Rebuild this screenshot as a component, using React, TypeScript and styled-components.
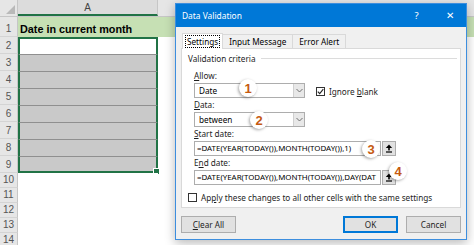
import React from 'react';
import styled, { createGlobalStyle } from 'styled-components';

const UI_FONT = `'Noto Sans', 'Open Sans', sans-serif`;
const SHEET_FONT = `'Liberation Sans', Arial, sans-serif`;
const GREEN = '#217346';

const GlobalStyle = createGlobalStyle`
  html, body {
    margin: 0;
    padding: 0;
    background: #fff;
    overflow: hidden;
  }
  #root {
    position: relative;
    width: 474px;
    height: 245px;
    overflow: hidden;
  }
`;

/* ---------- spreadsheet behind the dialog ---------- */

const Sheet = styled.div`
  display: flex;
  flex-direction: column;
  width: 474px;
  height: 245px;
  font-family: ${SHEET_FONT};
  background: #fff;
`;

const HeaderRow = styled.div`
  display: flex;
  flex: none;
  height: 17px;
  background: #e6e6e6;
  border-bottom: 1px solid #c6c6c6;
  box-sizing: border-box;
`;

const Corner = styled.div`
  position: relative;
  width: 18px;
  border-right: 1px solid #c6c6c6;
  box-sizing: border-box;

  &::after {
    content: '';
    position: absolute;
    right: 2px;
    bottom: 2px;
    border-left: 9px solid transparent;
    border-bottom: 9px solid #b9b9b9;
  }
`;

const ColHead = styled.div`
  display: flex;
  align-items: center;
  justify-content: center;
  width: 140px;
  background: #dcdcdc;
  border-right: 1px solid #c6c6c6;
  border-bottom: 2px solid ${GREEN};
  box-sizing: border-box;
  color: #444;
  font-size: 10px;
`;

const SheetRow = styled.div<{ $h: number }>`
  display: flex;
  flex: none;
  height: ${(p) => p.$h}px;
`;

const RowHead = styled.div`
  display: flex;
  align-items: flex-end;
  justify-content: center;
  width: 18px;
  padding-bottom: 1px;
  background: #e6e6e6;
  border-right: 1px solid #c6c6c6;
  border-bottom: 1px solid #d4d4d4;
  box-sizing: border-box;
  color: #555;
  font-size: 10px;
  line-height: 12px;
`;

type CellKind = 'title' | 'active' | 'filled' | 'last' | 'plain';

const Cell = styled.div<{ $kind: CellKind }>`
  position: relative;
  display: flex;
  align-items: flex-end;
  width: 140px;
  padding: 0 0 2px 2px;
  box-sizing: border-box;
  font-size: 10.8px;
  font-weight: bold;
  color: #000;
  background: ${(p) =>
    p.$kind === 'title' ? '#c6e0b4' : p.$kind === 'filled' || p.$kind === 'last' ? '#c9c9c9' : '#fff'};
  border-left: ${(p) => (p.$kind === 'title' || p.$kind === 'plain' ? 'none' : `2px solid ${GREEN}`)};
  border-right: ${(p) => (p.$kind === 'title' || p.$kind === 'plain' ? 'none' : `2px solid ${GREEN}`)};
  border-top: ${(p) =>
    p.$kind === 'active' ? `2px solid ${GREEN}` : p.$kind === 'filled' || p.$kind === 'last' ? '1px solid #8f8f8f' : 'none'};
  border-bottom: ${(p) => (p.$kind === 'last' ? `2px solid ${GREEN}` : 'none')};
`;

const FillHandle = styled.span`
  position: absolute;
  right: -4px;
  bottom: -4px;
  width: 5px;
  height: 5px;
  background: ${GREEN};
  border: 1px solid #fff;
`;

const RestCell = styled.div<{ $green?: boolean }>`
  flex: 1;
  background: ${(p) => (p.$green ? '#c6e0b4' : '#fff')};
`;

const HeadRest = styled.div`
  flex: 1;
`;

/* ---------- dialog ---------- */

const Dialog = styled.div`
  position: absolute;
  left: 175px;
  top: 3px;
  width: 292px;
  height: 237px;
  display: flex;
  flex-direction: column;
  box-sizing: border-box;
  border: 1px solid #3d8ede;
  background: #f0f0f0;
  box-shadow: 0 3px 10px rgba(0, 0, 0, 0.28);
  font-family: ${UI_FONT};
  font-size: 8.2px;
  color: #000;
`;

const TitleBar = styled.div`
  display: flex;
  align-items: center;
  flex: none;
  height: 23px;
  padding-left: 6px;
  background: #0078d7;
  color: #fff;
  font-size: 8.4px;
`;

const TitleText = styled.span`
  flex: 1;
`;

const TitleButton = styled.span`
  display: flex;
  align-items: center;
  justify-content: center;
  width: 33px;
  height: 100%;
  color: #fff;
  font-size: 9.5px;
`;

const Body = styled.div`
  display: flex;
  flex-direction: column;
  flex: 1;
  padding: 5px 5px 6px 5px;
`;

const TabStrip = styled.div`
  display: flex;
  align-items: flex-end;
  height: 16px;
  padding-left: 1px;
`;

const Tab = styled.div<{ $active?: boolean }>`
  display: flex;
  align-items: center;
  height: ${(p) => (p.$active ? 16 : 14)}px;
  padding: 0 ${(p) => (p.$active ? 3 : 6)}px;
  margin-bottom: ${(p) => (p.$active ? -1 : 0)}px;
  background: ${(p) => (p.$active ? '#fff' : '#f0f0f0')};
  border: 1px solid #d9d9d9;
  border-bottom: none;
  box-sizing: border-box;
  z-index: ${(p) => (p.$active ? 1 : 0)};
  & + & {
    border-left: none;
  }
`;

const FocusLabel = styled.span`
  padding: 0 1px;
  line-height: 11px;
  outline: 1px dotted #000;
`;

const Panel = styled.div`
  position: relative;
  display: flex;
  flex-direction: column;
  height: 160px;
  padding: 3px 3px 0 6px;
  background: #fff;
  border: 1px solid #d9d9d9;
  box-sizing: border-box;
`;

const Legend = styled.div`
  display: flex;
  align-items: center;
  gap: 5px;
  height: 12px;
  color: #1e1e1e;

  &::after {
    content: '';
    flex: 1;
    height: 1px;
    background: #dcdcdc;
  }
`;

const Fields = styled.div`
  display: flex;
  flex-direction: column;
  padding: 5px 0 0 6px;
`;

const FieldRow = styled.div`
  display: flex;
  align-items: flex-end;
  gap: 11px;
`;

const Field = styled.div`
  display: flex;
  flex-direction: column;
`;

const Label = styled.div`
  height: 13px;
  line-height: 13px;
  margin-bottom: 1px;
  color: #1e1e1e;
`;

const Key = styled.span`
  text-decoration: underline;
  text-underline-offset: 1px;
`;

const Combo = styled.div`
  display: flex;
  width: 111px;
  height: 15px;
  background: #fff;
  border: 1px solid #adadad;
  box-sizing: border-box;
`;

const ComboText = styled.span`
  flex: 1;
  padding-left: 4px;
  line-height: 13px;
`;

const ComboArrow = styled.span`
  display: flex;
  align-items: center;
  justify-content: center;
  width: 10px;
  background: #e8e8e8;
  border-left: 1px solid #d0d0d0;
`;

const FormulaRow = styled.div`
  display: flex;
  gap: 1px;
`;

const TextBox = styled.div`
  width: 187px;
  height: 15px;
  padding-left: 2px;
  overflow: hidden;
  white-space: nowrap;
  line-height: 13px;
  background: #fff;
  border: 1px solid #adadad;
  box-sizing: border-box;
  font-size: 7.9px;
`;

const CollapseButton = styled.div`
  display: flex;
  align-items: center;
  justify-content: center;
  width: 14px;
  height: 15px;
  background: #e1e1e1;
  border: 1px solid #adadad;
  box-sizing: border-box;
`;

const CheckRow = styled.label<{ $top?: number }>`
  display: flex;
  align-items: center;
  gap: 4px;
  height: 12px;
  margin-top: ${(p) => p.$top ?? 0}px;
  margin-bottom: ${(p) => (p.$top ? 0 : 1)}px;
  color: #1e1e1e;
`;

const Box = styled.span`
  display: flex;
  align-items: center;
  justify-content: center;
  width: 9px;
  height: 9px;
  background: #fff;
  border: 1px solid #333;
  box-sizing: border-box;
`;

const Badge = styled.span<{ $x: number; $y: number }>`
  position: absolute;
  left: ${(p) => p.$x - 9}px;
  top: ${(p) => p.$y - 9}px;
  display: flex;
  align-items: center;
  justify-content: center;
  width: 18px;
  height: 18px;
  border-radius: 50%;
  background: #fff;
  box-shadow: -1px 1px 3px rgba(0, 0, 0, 0.35);
  color: #c55a11;
  font-family: ${SHEET_FONT};
  font-size: 13px;
  font-weight: bold;
`;

const ButtonRow = styled.div`
  display: flex;
  gap: 8px;
  margin-top: 8px;
`;

const Spacer = styled.div`
  flex: 1;
`;

const Button = styled.div<{ $default?: boolean }>`
  display: flex;
  align-items: center;
  justify-content: center;
  width: 55px;
  height: 17px;
  background: #e1e1e1;
  border: ${(p) => (p.$default ? '2px solid #0078d7' : '1px solid #adadad')};
  box-sizing: border-box;
  color: #1e1e1e;
`;

const Chevron = () => (
  <svg width="7" height="5" viewBox="0 0 7 5">
    <polyline points="0.5,1 3.5,4 6.5,1" fill="none" stroke="#707070" strokeWidth="1" />
  </svg>
);

const Check = () => (
  <svg width="7" height="7" viewBox="0 0 7 7">
    <polyline points="0.8,3.6 2.7,5.6 6.3,1.2" fill="none" stroke="#222" strokeWidth="1.1" />
  </svg>
);

const CollapseIcon = () => (
  <svg width="8" height="9" viewBox="0 0 8 9">
    <polygon points="4,0.5 0.8,4 7.2,4" fill="#000" />
    <rect x="3.2" y="4" width="1.6" height="2.4" fill="#000" />
    <rect x="1" y="7.4" width="6" height="1.2" fill="#000" />
  </svg>
);

const rows: { n: number; h: number; kind: CellKind; text?: string }[] = [
  { n: 1, h: 20, kind: 'title', text: 'Date in current month' },
  { n: 2, h: 17, kind: 'active' },
  { n: 3, h: 17, kind: 'filled' },
  { n: 4, h: 17, kind: 'filled' },
  { n: 5, h: 17, kind: 'filled' },
  { n: 6, h: 17, kind: 'filled' },
  { n: 7, h: 17, kind: 'filled' },
  { n: 8, h: 17, kind: 'filled' },
  { n: 9, h: 17, kind: 'last' },
  { n: 10, h: 15, kind: 'plain' },
  { n: 11, h: 15, kind: 'plain' },
  { n: 12, h: 15, kind: 'plain' },
  { n: 13, h: 15, kind: 'plain' },
  { n: 14, h: 15, kind: 'plain' },
];

const App: React.FunctionComponent = () => {
  return (
    <>
      <GlobalStyle />
      <Sheet>
        <HeaderRow>
          <Corner />
          <ColHead>A</ColHead>
          <HeadRest />
        </HeaderRow>
        {rows.map((r) => (
          <SheetRow key={r.n} $h={r.h}>
            <RowHead>{r.n}</RowHead>
            <Cell $kind={r.kind}>
              {r.text}
              {r.kind === 'last' && <FillHandle />}
            </Cell>
            <RestCell $green={r.kind === 'title'} />
          </SheetRow>
        ))}
      </Sheet>

      <Dialog>
        <TitleBar>
          <TitleText>Data Validation</TitleText>
          <TitleButton>?</TitleButton>
          <TitleButton>✕</TitleButton>
        </TitleBar>
        <Body>
          <TabStrip>
            <Tab $active>
              <FocusLabel>Settings</FocusLabel>
            </Tab>
            <Tab>Input Message</Tab>
            <Tab>Error Alert</Tab>
          </TabStrip>
          <Panel>
            <Legend>Validation criteria</Legend>
            <Fields>
              <FieldRow>
                <Field>
                  <Label>
                    <Key>A</Key>llow:
                  </Label>
                  <Combo>
                    <ComboText>Date</ComboText>
                    <ComboArrow>
                      <Chevron />
                    </ComboArrow>
                  </Combo>
                </Field>
                <CheckRow>
                  <Box>
                    <Check />
                  </Box>
                  <span>
                    Ignore <Key>b</Key>lank
                  </span>
                </CheckRow>
              </FieldRow>
              <Field>
                <Label>
                  <Key>D</Key>ata:
                </Label>
                <Combo>
                  <ComboText>between</ComboText>
                  <ComboArrow>
                    <Chevron />
                  </ComboArrow>
                </Combo>
              </Field>
              <Field>
                <Label>
                  <Key>S</Key>tart date:
                </Label>
                <FormulaRow>
                  <TextBox>=DATE(YEAR(TODAY()),MONTH(TODAY()),1)</TextBox>
                  <CollapseButton>
                    <CollapseIcon />
                  </CollapseButton>
                </FormulaRow>
              </Field>
              <Field>
                <Label>
                  E<Key>n</Key>d date:
                </Label>
                <FormulaRow>
                  <TextBox>=DATE(YEAR(TODAY()),MONTH(TODAY()),DAY(DAT</TextBox>
                  <CollapseButton>
                    <CollapseIcon />
                  </CollapseButton>
                </FormulaRow>
              </Field>
            </Fields>
            <CheckRow $top={6}>
              <Box />
              <span>
                Ap<Key>p</Key>ly these changes to all other cells with the same settings
              </span>
            </CheckRow>
            <Badge $x={66} $y={39}>1</Badge>
            <Badge $x={77} $y={71}>2</Badge>
            <Badge $x={189} $y={100}>3</Badge>
            <Badge $x={216} $y={122}>4</Badge>
          </Panel>
          <ButtonRow>
            <Button>
              <span>
                <Key>C</Key>lear All
              </span>
            </Button>
            <Spacer />
            <Button $default>OK</Button>
            <Button>Cancel</Button>
          </ButtonRow>
        </Body>
      </Dialog>
    </>
  );
};

export default App;
